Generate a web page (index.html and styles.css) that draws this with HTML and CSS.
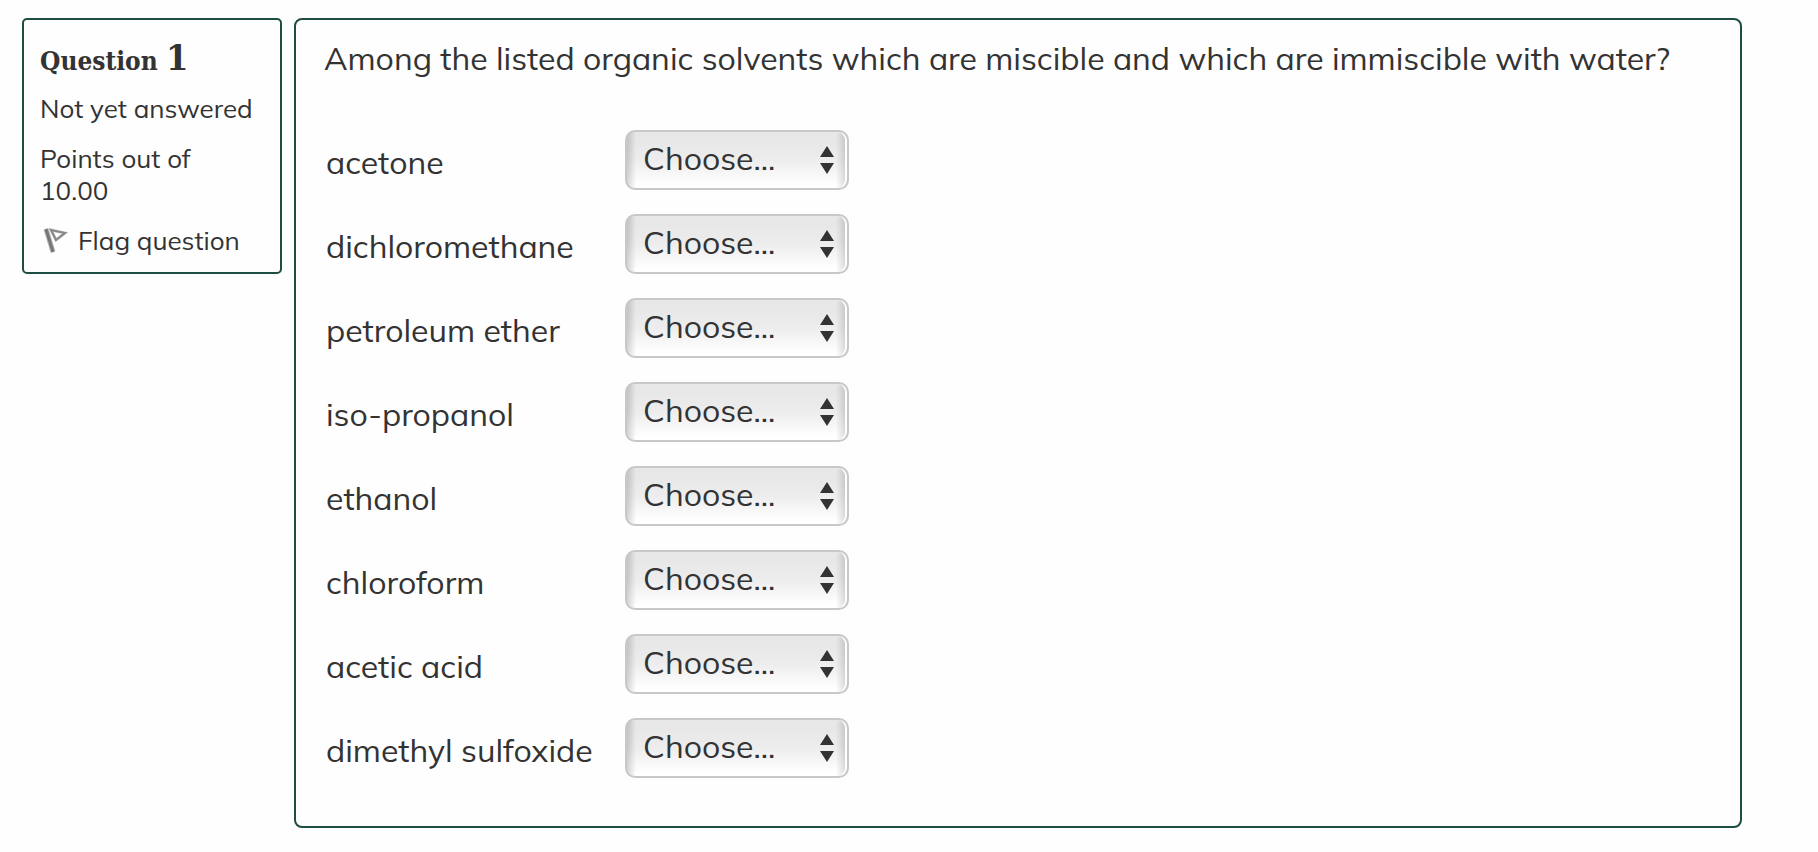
FILE: index.html
```html
<!DOCTYPE html>
<html lang="en">
<head>
    <meta charset="UTF-8">
    <meta name="viewport" content="width=device-width, initial-scale=1.0">
    <title>Question 1</title>
    <link rel="stylesheet" href="styles.css">
</head>
<body>
    <main class="question">
        <!-- Question info -->
        <aside class="info">
            <h3 class="number">Question <span class="qno">1</span></h3>
            <div class="state">Not yet answered</div>
            <div class="grade">Points out of 10.00</div>
            <a href="#" class="flag">
                <svg class="flag-icon" width="32" height="32" viewBox="0 0 32 32" fill="none" aria-hidden="true">
                    <path d="M6 4 L13 27" stroke="#b5b5b5" stroke-width="5"/>
                    <path d="M6 4 L13 27" stroke="#777" stroke-width="3"/>
                    <path d="M11 5 L25 8 L16 15 Z" stroke="#ccc" stroke-width="3"/>
                    <path d="M11 5 L25 8 L16 15 Z" stroke="#888" stroke-width="2"/>
                </svg>
                <span>Flag question</span>
            </a>
        </aside>

        <!-- Question content -->
        <section class="formulation">
            <p class="qtext">Among the listed organic solvents which are miscible and which are immiscible with water?</p>
            <table class="answer">
                <tbody>
                    <tr>
                        <td class="text"><label for="sub1">acetone</label></td>
                        <td class="control"><select id="sub1" class="select"><option>Choose...</option><option>miscible</option><option>immiscible</option></select></td>
                    </tr>
                    <tr>
                        <td class="text"><label for="sub2">dichloromethane</label></td>
                        <td class="control"><select id="sub2" class="select"><option>Choose...</option><option>miscible</option><option>immiscible</option></select></td>
                    </tr>
                    <tr>
                        <td class="text"><label for="sub3">petroleum ether</label></td>
                        <td class="control"><select id="sub3" class="select"><option>Choose...</option><option>miscible</option><option>immiscible</option></select></td>
                    </tr>
                    <tr>
                        <td class="text"><label for="sub4">iso-propanol</label></td>
                        <td class="control"><select id="sub4" class="select"><option>Choose...</option><option>miscible</option><option>immiscible</option></select></td>
                    </tr>
                    <tr>
                        <td class="text"><label for="sub5">ethanol</label></td>
                        <td class="control"><select id="sub5" class="select"><option>Choose...</option><option>miscible</option><option>immiscible</option></select></td>
                    </tr>
                    <tr>
                        <td class="text"><label for="sub6">chloroform</label></td>
                        <td class="control"><select id="sub6" class="select"><option>Choose...</option><option>miscible</option><option>immiscible</option></select></td>
                    </tr>
                    <tr>
                        <td class="text"><label for="sub7">acetic acid</label></td>
                        <td class="control"><select id="sub7" class="select"><option>Choose...</option><option>miscible</option><option>immiscible</option></select></td>
                    </tr>
                    <tr>
                        <td class="text"><label for="sub8">dimethyl sulfoxide</label></td>
                        <td class="control"><select id="sub8" class="select"><option>Choose...</option><option>miscible</option><option>immiscible</option></select></td>
                    </tr>
                </tbody>
            </table>
        </section>
    </main>
</body>
</html>
```
FILE: styles.css
```css
* {
    box-sizing: border-box;
}

body {
    margin: 0;
    background: #fefefe;
    color: #333;
    font-family: Mulish, "Open Sans", sans-serif;
    font-size: 32px;
}

.question {
    display: flex;
    align-items: flex-start;
    gap: 12px;
    padding: 18px 76px 24px 22px;
}

/* Question info */
.info {
    flex: none;
    width: 260px;
    padding: 16px 16px 15px;
    border: 2px solid #1d4d43;
    border-radius: 5px;
    font-size: 26px;
    line-height: 32px;
}

.number {
    height: 42px;
    margin: 0 0 15px;
    font-family: "Roboto Slab", "DejaVu Serif Condensed", "DejaVu Serif", serif;
    font-size: 26px;
    font-weight: bold;
    line-height: 42px;
}

.qno {
    font-size: 36px;
}

.state,
.grade {
    margin-bottom: 18px;
}

.flag {
    display: flex;
    align-items: center;
    gap: 6px;
    color: #333;
    text-decoration: none;
}

.flag-icon {
    flex: none;
}

/* Question content */
.formulation {
    flex: 1;
    min-width: 0;
    padding: 20px 28px 36px;
    border: 2px solid #1d4d43;
    border-radius: 8px;
}

.qtext {
    margin: 0 0 42px;
    line-height: 36px;
}

.answer {
    border-collapse: collapse;
}

.answer td {
    height: 84px;
    padding: 0;
    vertical-align: middle;
}

.answer .text {
    width: 301px;
    padding: 4px 0 0 2px;
}

.select {
    display: block;
    width: 224px;
    height: 60px;
    padding: 0 16px 4px;
    border: 2px solid #c8c8c8;
    border-radius: 10px;
    color: #333;
    font: inherit;
    appearance: none;
    /* arrows, side shading, then the vertical fade */
    background:
        url("data:image/svg+xml,%3Csvg xmlns='http://www.w3.org/2000/svg' width='14' height='28'%3E%3Cpath d='M7 0 14 11H0zM0 17H14L7 28z' fill='%23333'/%3E%3C/svg%3E") no-repeat right 13px center,
        linear-gradient(to right, rgba(0, 0, 0, 0.16), transparent 9px),
        linear-gradient(to left, rgba(0, 0, 0, 0.16), transparent 11px),
        linear-gradient(#e7e7e7 15%, #ededed 50%, #fff 95%);
    box-shadow: inset -2px 0 0 #fff;
}
```
